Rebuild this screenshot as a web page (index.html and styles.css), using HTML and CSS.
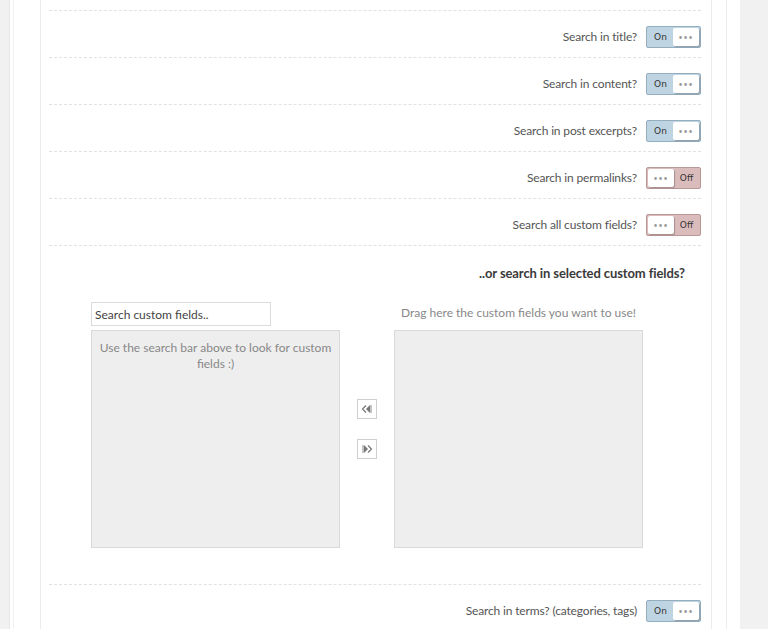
FILE: index.html
```html
<!DOCTYPE html>
<html>
<head>
<meta charset="utf-8">
<link rel="stylesheet" href="styles.css">
</head>
<body>
<div class="outer">
  <div class="middle">
    <div class="panel">
      <div class="top-gap"></div>
      <div class="row">
        <span class="label">Search in title?</span>
        <span class="toggle on"><span class="state">On</span><span class="knob">•••</span></span>
      </div>
      <div class="row">
        <span class="label">Search in content?</span>
        <span class="toggle on"><span class="state">On</span><span class="knob">•••</span></span>
      </div>
      <div class="row">
        <span class="label">Search in post excerpts?</span>
        <span class="toggle on"><span class="state">On</span><span class="knob">•••</span></span>
      </div>
      <div class="row">
        <span class="label">Search in permalinks?</span>
        <span class="toggle off"><span class="knob">•••</span><span class="state">Off</span></span>
      </div>
      <div class="row">
        <span class="label">Search all custom fields?</span>
        <span class="toggle off"><span class="knob">•••</span><span class="state">Off</span></span>
      </div>
      <div class="fields">
        <div class="fields-title">..or search in selected custom fields?</div>
        <div class="fields-grid">
          <div class="col">
            <input class="search" type="text" value="Search custom fields..">
            <div class="box"><p>Use the search bar above to look for custom fields :)</p></div>
          </div>
          <div class="mid">
            <span class="arrow-btn">
              <svg width="12" height="12" viewBox="0 0 12 12"><path d="M5 2.5 L1.5 6 L5 9.5" fill="none" stroke="#777" stroke-width="1.2"/><path d="M9 2 L5 6 L9 10 Z" fill="#777"/><path d="M10 2 V10" stroke="#888" stroke-width="1"/></svg>
            </span>
            <span class="arrow-btn">
              <svg width="12" height="12" viewBox="0 0 12 12"><path d="M7 2.5 L10.5 6 L7 9.5" fill="none" stroke="#777" stroke-width="1.2"/><path d="M3 2 L7 6 L3 10 Z" fill="#777"/><path d="M2 2 V10" stroke="#888" stroke-width="1"/></svg>
            </span>
          </div>
          <div class="col">
            <div class="drag-hint">Drag here the custom fields you want to use!</div>
            <div class="box"></div>
          </div>
        </div>
      </div>
      <div class="row last">
        <span class="label">Search in terms? (categories, tags)</span>
        <span class="toggle on"><span class="state">On</span><span class="knob">•••</span></span>
      </div>
    </div>
  </div>
</div>
</body>
</html>
```

FILE: styles.css
```css
html, body {
  margin: 0;
  padding: 0;
}
body {
  background: #f1f1f1;
  font-family: Lato, "Open Sans", sans-serif;
  color: #555;
  height: 629px;
  overflow: hidden;
}
.outer {
  margin-left: 9px;
  width: 731px;
  background: #fff;
  height: 629px;
  border-left: 1px solid #e6e6e6;
  box-sizing: border-box;
}
.middle {
  margin-left: 3px;
  width: 714px;
  height: 629px;
  border-left: 1px solid #f2f2f2;
  border-right: 1px solid #ededed;
  box-sizing: border-box;
  padding-left: 26px;
}
.panel {
  width: 672px;
  height: 629px;
  box-sizing: border-box;
  border-left: 1px solid #ececec;
  border-right: 1px solid #ececec;
  padding: 0 10px 0 8px;
}
.top-gap {
  height: 10px;
}
.row {
  border-top: 1px dashed #e2e2e2;
  height: 46px;
  display: flex;
  justify-content: flex-end;
  align-items: flex-start;
}
.label {
  font-size: 12px;
  line-height: 16px;
  letter-spacing: -0.15px;
  margin-top: 18px;
  margin-right: 9px;
  color: #555;
}
.toggle {
  margin-top: 15px;
  width: 55px;
  height: 22px;
  box-sizing: border-box;
  border: 1px solid #94adbf;
  background: #bfd4e2;
  border-radius: 2px;
  display: flex;
  align-items: center;
  padding: 1px 1px 2px 1px;
}
.toggle.off {
  border-color: #b99797;
  background: #dbbcbc;
}
.state {
  flex: 1;
  text-align: center;
  font-size: 9px;
  color: #333;
  font-family: "DejaVu Sans", sans-serif;
}
.knob {
  width: 26px;
  height: 18px;
  background: #fff;
  border-radius: 2px;
  box-shadow: 1px 1px 1px rgba(0,0,0,0.25);
  font-size: 7px;
  letter-spacing: 1px;
  color: #999;
  display: flex;
  align-items: center;
  justify-content: center;
}
.fields {
  border-top: 1px dashed #e2e2e2;
  height: 338px;
  padding-left: 42px;
}
.fields-title {
  text-align: right;
  font-weight: bold;
  font-size: 13px;
  line-height: 18px;
  letter-spacing: -0.1px;
  color: #3a3a3a;
  padding-top: 18px;
  padding-right: 16px;
  height: 38px;
}
.fields-grid {
  display: grid;
  grid-template-columns: 249px 54px 249px;
}
.col {
  display: flex;
  flex-direction: column;
}
.search {
  width: 180px;
  height: 24px;
  box-sizing: border-box;
  border: 1px solid #dcdcdc;
  font-family: Lato, "Open Sans", sans-serif;
  font-size: 12px;
  color: #444;
  padding: 0 3px;
  margin: 0 0 4px 0;
  outline: none;
}
.drag-hint {
  height: 28px;
  font-size: 12px;
  line-height: 22px;
  text-align: center;
  color: #888;
}
.box {
  height: 218px;
  box-sizing: border-box;
  background: #eeeeee;
  border: 1px solid #d9d9d9;
}
.box p {
  margin: 9px 4px 0;
  font-size: 12px;
  line-height: 16px;
  text-align: center;
  color: #888;
}
.mid {
  display: flex;
  flex-direction: column;
  align-items: center;
  justify-content: center;
  gap: 20px;
  padding-top: 8px;
}
.arrow-btn {
  width: 20px;
  height: 20px;
  box-sizing: border-box;
  border: 1px solid #cfcfcf;
  background: #fff;
  display: flex;
  align-items: center;
  justify-content: center;
}
```
